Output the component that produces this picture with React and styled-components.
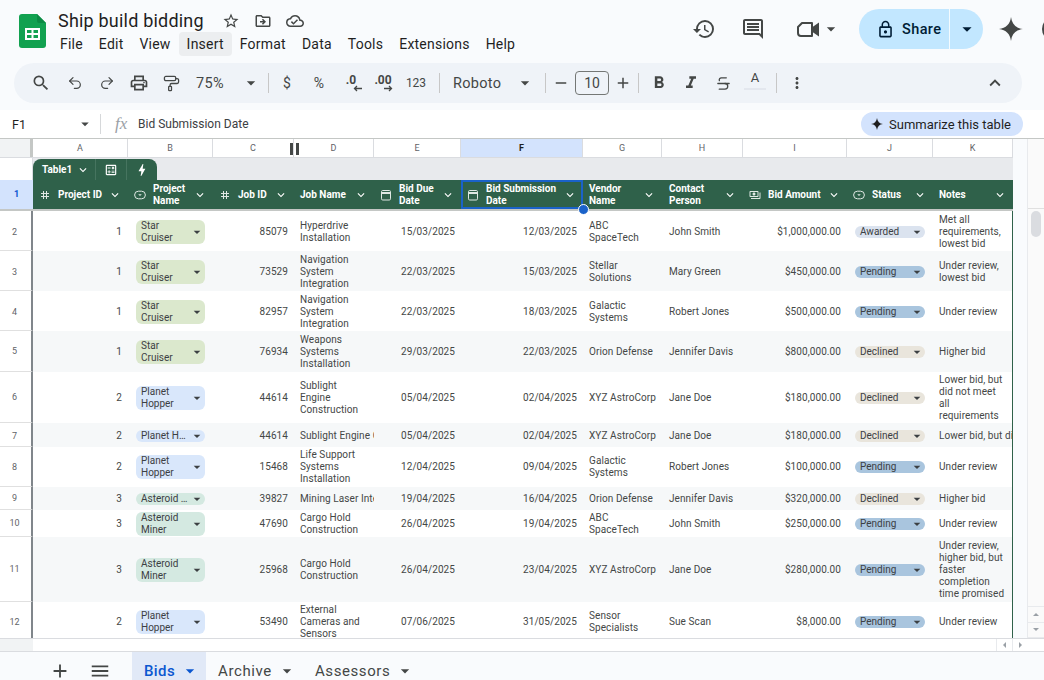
import React from 'react';
import styled, { createGlobalStyle } from 'styled-components';
import {
  MdSearch, MdOutlinePrint, MdArrowDropDown,
  MdRemove, MdAdd, MdFormatBold, MdFormatItalic, MdMoreVert, MdExpandLess,
  MdHistory, MdOutlineComment, MdLockOutline, MdStarBorder,
  MdOutlineDriveFileMove, MdOutlineCloudDone, MdKeyboardArrowDown, MdMenu, MdOutlineCalculate,
  MdOutlineBolt, MdOutlinePayments, MdTag,
} from 'react-icons/md';
import { Undo2, Redo2, PaintRoller, Strikethrough } from 'lucide-react';

const GlobalStyle = createGlobalStyle`
  html, body { margin: 0; padding: 0; background: #f9fbfd; }
  body { font-family: Roboto, "Liberation Sans", sans-serif; color: #444746; }
`;

const GREEN = '#2f614a';
const COLS = '33px 95px 85px 81px 80px 87px 122px 79px 81px 104px 86px 80px';

const columns = ['A', 'B', 'C', 'D', 'E', 'F', 'G', 'H', 'I', 'J', 'K'];

const headers = [
  { label: 'Project ID', icon: 'hash' },
  { label: 'Project Name', icon: 'pill' },
  { label: 'Job ID', icon: 'hash' },
  { label: 'Job Name' },
  { label: 'Bid Due Date', icon: 'date' },
  { label: 'Bid Submission Date', icon: 'date', selected: true },
  { label: 'Vendor Name' },
  { label: 'Contact Person', inset: true },
  { label: 'Bid Amount', icon: 'money' },
  { label: 'Status', icon: 'pill' },
  { label: 'Notes' },
];

const rows = [
  { n: 2, h: 40, nudge: true, pid: 1, ship: 'Star Cruiser', job: 85079, name: 'Hyperdrive Installation', due: '15/03/2025', sub: '12/03/2025', vendor: 'ABC SpaceTech', person: 'John Smith', amount: '$1,000,000.00', status: 'Awarded', notes: 'Met all requirements, lowest bid' },
  { n: 3, h: 40, nudge: true, pid: 1, ship: 'Star Cruiser', job: 73529, name: 'Navigation System Integration', due: '22/03/2025', sub: '15/03/2025', vendor: 'Stellar Solutions', person: 'Mary Green', amount: '$450,000.00', status: 'Pending', notes: 'Under review, lowest bid' },
  { n: 4, h: 40, nudge: true, pid: 1, ship: 'Star Cruiser', job: 82957, name: 'Navigation System Integration', due: '22/03/2025', sub: '18/03/2025', vendor: 'Galactic Systems', person: 'Robert Jones', amount: '$500,000.00', status: 'Pending', notes: 'Under review' },
  { n: 5, h: 41, pid: 1, ship: 'Star Cruiser', job: 76934, name: 'Weapons Systems Installation', due: '29/03/2025', sub: '22/03/2025', vendor: 'Orion Defense', person: 'Jennifer Davis', amount: '$800,000.00', status: 'Declined', notes: 'Higher bid' },
  { n: 6, h: 51, pid: 2, ship: 'Planet Hopper', job: 44614, name: 'Sublight Engine Construction', due: '05/04/2025', sub: '02/04/2025', vendor: 'XYZ AstroCorp', person: 'Jane Doe', amount: '$180,000.00', status: 'Declined', notes: 'Lower bid, but did not meet all requirements' },
  { n: 7, h: 24, nudge: true, clip: true, pid: 2, ship: 'Planet Hopper', job: 44614, name: 'Sublight Engine Construction', due: '05/04/2025', sub: '02/04/2025', vendor: 'XYZ AstroCorp', person: 'Jane Doe', amount: '$180,000.00', status: 'Declined', notes: 'Lower bid, but did not meet all requirements' },
  { n: 8, h: 40, pid: 2, ship: 'Planet Hopper', job: 15468, name: 'Life Support Systems Installation', due: '12/04/2025', sub: '09/04/2025', vendor: 'Galactic Systems', person: 'Robert Jones', amount: '$100,000.00', status: 'Pending', notes: 'Under review' },
  { n: 9, h: 23, clip: true, pid: 3, ship: 'Asteroid Miner', job: 39827, name: 'Mining Laser Integration', due: '19/04/2025', sub: '16/04/2025', vendor: 'Orion Defense', person: 'Jennifer Davis', amount: '$320,000.00', status: 'Declined', notes: 'Higher bid' },
  { n: 10, h: 27, pid: 3, ship: 'Asteroid Miner', job: 47690, name: 'Cargo Hold Construction', due: '26/04/2025', sub: '19/04/2025', vendor: 'ABC SpaceTech', person: 'John Smith', amount: '$250,000.00', status: 'Pending', notes: 'Under review' },
  { n: 11, h: 65, pid: 3, ship: 'Asteroid Miner', job: 25968, name: 'Cargo Hold Construction', due: '26/04/2025', sub: '23/04/2025', vendor: 'XYZ AstroCorp', person: 'Jane Doe', amount: '$280,000.00', status: 'Pending', notes: 'Under review, higher bid, but faster completion time promised' },
  { n: 12, h: 40, pid: 2, ship: 'Planet Hopper', job: 53490, name: 'External Cameras and Sensors', due: '07/06/2025', sub: '31/05/2025', vendor: 'Sensor Specialists', person: 'Sue Scan', amount: '$8,000.00', status: 'Pending', notes: 'Under review' },
];

const shipColors = { 'Star Cruiser': '#dbe8cd', 'Planet Hopper': '#d9e7fb', 'Asteroid Miner': '#d4e9e1' };
const statusColors = { Awarded: '#dbe3ef', Pending: '#a9c5de', Declined: '#e9e5dc' };

const Page = styled.div`
  width: 1044px;
  height: 680px;
  display: flex;
  flex-direction: column;
  overflow: hidden;
  background: #f9fbfd;
`;

const TopBar = styled.header`
  height: 63px;
  flex: none;
  display: flex;
  padding-left: 19px;
`;

const Logo = styled.svg`
  width: 27px;
  height: 34px;
  flex: none;
  margin: 14px 12px 0 0;
`;

const TitleColumn = styled.div`
  width: 626px;
  flex: none;
  padding-top: 9px;
`;

const TitleRow = styled.div`
  height: 23px;
  display: flex;
  align-items: center;
  color: #444746;
  font-size: 18px;
`;

const DocName = styled.span`
  width: 157px;
  color: #1f1f1f;
  letter-spacing: 0.2px;
  white-space: nowrap;
`;

const TitleIcon = styled.span`
  width: 32px;
  display: flex;
  justify-content: center;
  font-size: 18px;
`;

const MenuBar = styled.nav`
  display: flex;
  margin: 0 0 0 -6px;
`;

const MenuItem = styled.span`
  height: 24px;
  line-height: 24px;
  padding: 0 8px;
  border-radius: 4px;
  font-size: 14px;
  letter-spacing: 0.22px;
  color: #1f1f1f;
  background: ${(p) => (p.$active ? '#eceef0' : 'transparent')};
`;

const TopActions = styled.div`
  display: flex;
  align-items: center;
  height: 58px;
  flex: none;
  color: #444746;
`;

const RoundIcon = styled.span`
  width: 40px;
  display: flex;
  justify-content: center;
  font-size: 24px;
  margin-right: ${(p) => p.$mr || 0}px;
`;

const VideoButton = styled.span`
  width: 71px;
  padding-left: 9px;
  box-sizing: border-box;
  display: flex;
  align-items: center;

  > svg + svg {
    font-size: 20px;
    margin-left: 1px;
  }
`;

const ShareButton = styled.div`
  width: 124px;
  height: 40px;
  display: flex;
  flex: none;
  border-radius: 20px;
  overflow: hidden;
  background: #c2e7ff;
  color: #001d35;
`;

const ShareMain = styled.span`
  width: 91px;
  box-sizing: border-box;
  padding-left: 17px;
  display: flex;
  align-items: center;
  gap: 7px;
  font-size: 14.5px;
  font-weight: 500;
  letter-spacing: 0.4px;
  border-right: 1px solid #f4fbff;

  > svg {
    font-size: 19px;
  }
`;

const ShareCaret = styled.span`
  flex: 1;
  display: flex;
  align-items: center;
  justify-content: center;
  font-size: 22px;
`;

const SparkSlot = styled.span`
  width: 32px;
  margin: 0 15px 0 12px;
  display: flex;
  justify-content: center;
  flex: none;
`;

const Avatar = styled.span`
  width: 24px;
  height: 24px;
  flex: none;
  box-sizing: border-box;
  border: 2px solid #444746;
  border-radius: 50%;
`;

const Toolbar = styled.div`
  height: 40px;
  flex: none;
  margin: 0 22px 0 14px;
  padding-left: 11px;
  border-radius: 20px;
  background: #eff3f8;
  display: flex;
  align-items: center;
  color: #444746;
`;

const ToolButton = styled.span`
  width: ${(p) => p.$w || 32}px;
  margin-left: ${(p) => p.$ml || 0}px;
  height: 28px;
  flex: none;
  display: flex;
  align-items: center;
  justify-content: center;
  font-size: ${(p) => p.$size || 18}px;
`;

const ToolText = styled.span`
  font-size: ${(p) => p.$size || 12}px;
  font-weight: ${(p) => p.$weight || 400};
  color: #444746;
`;

const Decimal = styled.span`
  position: relative;
  display: block;
  font-size: 12px;
  font-weight: 700;
  line-height: 12px;
  margin-top: -6px;
`;

const DecimalArrow = styled.svg`
  position: absolute;
  right: ${(p) => p.$right}px;
  top: 11px;
  width: 9px;
  height: 7px;
`;

const Select = styled.span`
  width: ${(p) => p.$w}px;
  flex: none;
  padding-left: ${(p) => p.$pl}px;
  box-sizing: border-box;
  display: flex;
  align-items: center;
  justify-content: space-between;
  font-size: 14.5px;
  letter-spacing: 0.3px;

  > svg {
    font-size: 20px;
    margin-right: ${(p) => p.$caret || 0}px;
  }
`;

const Divider = styled.span`
  width: 1px;
  height: 20px;
  flex: none;
  background: #c7c7c7;
`;

const SizeBox = styled.span`
  width: 34px;
  height: 24px;
  box-sizing: border-box;
  flex: none;
  margin: 0 -1px;
  border: 1px solid #747775;
  border-radius: 4px;
  font-size: 14px;
  line-height: 22px;
  text-align: center;
`;

const ColorA = styled.span`
  display: block;
  width: 22px;
  height: 19px;
  line-height: 14px;
  text-align: center;
  font-size: 13px;
  border-bottom: 2px solid #e3e7ee;
  box-sizing: border-box;
  margin-top: -6px;
`;

const FormulaBar = styled.div`
  height: 28px;
  flex: none;
  margin-top: 7px;
  display: flex;
  align-items: center;
  background: #fff;
`;

const NameBox = styled.span`
  width: 101px;
  padding: 0 6px 0 12px;
  box-sizing: border-box;
  display: flex;
  align-items: center;
  justify-content: space-between;
  font-size: 12.5px;
  color: #1f1f1f;
  border-right: 1px solid #d6d8da;
  height: 20px;

  > svg {
    font-size: 18px;
    color: #444746;
  }
`;

const FxLabel = styled.span`
  width: 37px;
  padding-left: 14px;
  box-sizing: border-box;
  font-family: "Liberation Serif", serif;
  font-style: italic;
  font-size: 17px;
  color: #9aa0a6;
`;

const FormulaText = styled.span`
  font-size: 12px;
  color: #3c4043;
  flex: 1;
`;

const SummarizeButton = styled.span`
  width: 162px;
  height: 24px;
  margin-right: 21px;
  border-radius: 12px;
  background: #d3e3fd;
  display: flex;
  align-items: center;
  padding-left: 10px;
  box-sizing: border-box;
  gap: 6px;
  font-size: 13px;
  color: #1f1f1f;
  white-space: nowrap;
`;

const Sheet = styled.section`
  flex: 1;
  min-height: 0;
  display: flex;
  flex-direction: column;
  border-top: 1px solid #c4c7c5;
  background: #fff;
`;

const SheetMain = styled.div`
  flex: 1;
  min-height: 0;
  display: flex;
`;

const Grid = styled.div`
  width: 1013px;
  flex: none;
  display: flex;
  flex-direction: column;
`;

const ColumnLetters = styled.div`
  display: grid;
  grid-template-columns: ${COLS};
  height: 18px;
  flex: none;
  border-bottom: 1px solid #dadce0;
  box-sizing: content-box;
  position: relative;
`;

const Corner = styled.div`
  background: #f1f3f4;
  border-right: 3px solid #c4c7c5;
  box-sizing: border-box;
`;

const Letter = styled.div`
  font-size: 9px;
  line-height: 18px;
  text-align: center;
  color: ${(p) => (p.$selected ? '#1f1f1f' : '#5f6368')};
  font-weight: ${(p) => (p.$selected ? 700 : 400)};
  background: ${(p) => (p.$selected ? '#d3e3fd' : '#fff')};
  border-right: 1px solid #dadce0;
  box-sizing: border-box;
`;

const DragHandle = styled.span`
  position: absolute;
  left: 290px;
  top: 4px;
  width: 9px;
  height: 12px;
  border-left: 3px solid #444746;
  border-right: 3px solid #444746;
  box-sizing: border-box;
`;

const BandRow = styled.div`
  height: 22px;
  flex: none;
  display: flex;
  background: #e8eaed;
`;

const BandCorner = styled.div`
  width: 33px;
  background: #fff;
  border-right: 1px solid #dadce0;
  box-sizing: border-box;
`;

const TableTab = styled.div`
  margin-top: 1px;
  width: 124px;
  display: flex;
  align-items: center;
  background: ${GREEN};
  border-radius: 8px 8px 0 0;
  color: #fff;
`;

const TabSegment = styled.span`
  width: ${(p) => p.$w}px;
  height: 100%;
  box-sizing: border-box;
  display: flex;
  align-items: center;
  justify-content: ${(p) => (p.$center ? 'center' : 'flex-start')};
  padding-left: ${(p) => (p.$center ? 0 : 9)}px;
  gap: 4px;
  font-size: 10px;
  font-weight: 700;
  border-right: ${(p) => (p.$last ? 'none' : '1px solid #46745f')};

  > svg {
    font-size: ${(p) => p.$icon || 14}px;
  }
`;

const HeaderRow = styled.div`
  display: grid;
  grid-template-columns: ${COLS};
  height: 29px;
  flex: none;
  background: ${GREEN};
  border-bottom: 2px solid #c4c7c5;
  box-sizing: content-box;
`;

const HeaderNumber = styled.div`
  background: #d3e3fd;
  color: #0b57d0;
  font-size: 9px;
  font-weight: 700;
  line-height: 29px;
  text-align: center;
`;

const HeaderCell = styled.div`
  position: relative;
  display: flex;
  align-items: center;
  gap: 7px;
  padding: 0 7px 0 ${(p) => (p.$inset ? 7 : 6)}px;
  color: #fff;
  font-size: 10px;
  font-weight: 700;
  line-height: 12px;
  box-shadow: ${(p) => (p.$selected ? 'inset 0 0 0 2px #1a62c9' : 'none')};
  min-width: 0;
`;

const HeaderIcon = styled.span`
  width: 12px;
  display: flex;
  justify-content: center;
  flex: none;
  font-size: 12px;
  color: #dfe8e3;
`;

const HeaderLabel = styled.span`
  flex: 1;
  min-width: 0;
`;

const HeaderChevron = styled(MdKeyboardArrowDown)`
  flex: none;
  font-size: 14px;
  margin: 0 -1px 0 -5px;
`;

const SelectionDot = styled.span`
  position: absolute;
  right: -6px;
  bottom: -6px;
  width: 9px;
  height: 9px;
  border-radius: 50%;
  background: #1a62c9;
  border: 1px solid #fff;
  z-index: 2;
`;

const Body = styled.div`
  flex: 1;
  min-height: 0;
  overflow: hidden;
`;

const Row = styled.div`
  display: grid;
  grid-template-columns: ${COLS};
  height: ${(p) => p.$h}px;
  font-size: 10px;
  line-height: 12px;
  color: #444746;
  background: ${(p) => (p.$alt ? '#f6f8f9' : '#fff')};

  ${(p) => p.$nudge && '> div { padding-top: 2px; }'}
`;

const RowNumber = styled.div`
  background: #fff;
  border-right: 2px solid #80868b;
  border-bottom: 1px solid #e0e0e0;
  box-sizing: border-box;
  display: flex;
  align-items: center;
  justify-content: center;
  padding-right: 2px;
  font-size: 9px;
  color: #5f6368;
`;

const Cell = styled.div`
  min-width: 0;
  overflow: hidden;
  display: flex;
  align-items: center;
  justify-content: ${(p) => (p.$right ? 'flex-end' : 'flex-start')};
  padding: 0 ${(p) => (p.$right ? 6 : 5)}px 0 ${(p) => (p.$inset ? 7 : 6)}px;
  white-space: ${(p) => (p.$clip ? 'nowrap' : 'normal')};
  letter-spacing: 0.08px;
  border-right: ${(p) => (p.$edge ? `1px solid ${GREEN}` : 'none')};
`;

const ChipCell = styled.div`
  display: flex;
  align-items: center;
  min-width: 0;
  padding: 0 8px;
`;

const Chip = styled.span`
  width: 100%;
  min-width: 0;
  display: flex;
  align-items: center;
  padding-left: 5px;
  box-sizing: border-box;
  background: ${(p) => p.$color};
  border-radius: ${(p) => (p.$pill ? 7 : 6)}px;
  height: ${(p) => (p.$pill || p.$clip ? 12 : 24)}px;
  color: #3c4043;

  > span {
    flex: 1;
    min-width: 0;
    ${(p) => p.$clip && 'white-space: nowrap; overflow: hidden; text-overflow: ellipsis;'}
  }

  > svg {
    flex: none;
    font-size: 16px;
  }
`;

const HScroll = styled.div`
  height: 12px;
  flex: none;
  display: flex;
  align-items: center;
  justify-content: flex-end;
  padding-right: 16px;
  border-top: 1px solid #dadce0;
  border-bottom: 1px solid #dadce0;
  box-sizing: content-box;
  background: #fff;
`;

const HScrollCorner = styled.span`
  width: 33px;
  height: 100%;
  margin-right: auto;
  background: #f1f3f4;
`;

const ScrollArrow = styled.span`
  width: 16px;
  height: 100%;
  display: flex;
  align-items: center;
  justify-content: center;
  border-left: 1px solid #e8eaed;
  box-sizing: border-box;
`;

const Triangle = styled.span`
  width: 0;
  height: 0;
  border-style: solid;
  border-color: transparent;
  border-width: 3px;
  ${(p) => p.$dir === 'left' && 'border-right-color: #9aa0a6; margin-left: -3px;'}
  ${(p) => p.$dir === 'right' && 'border-left-color: #9aa0a6; margin-right: -3px;'}
  ${(p) => p.$dir === 'up' && 'border-bottom-color: #9aa0a6; margin-top: -3px;'}
  ${(p) => p.$dir === 'down' && 'border-top-color: #9aa0a6; margin-bottom: -3px;'}
`;

const Gutter = styled.div`
  width: 31px;
  flex: none;
  display: flex;
  background: #fafafa;
`;

const GutterBlank = styled.div`
  width: 14px;
  flex: none;
  background: #f9fbfd;
`;

const ScrollTrack = styled.div`
  flex: 1;
  display: flex;
  flex-direction: column;
  background: #fafafa;
  border-left: 1px solid #e8eaed;
`;

const TrackHead = styled.div`
  height: 70px;
  flex: none;
  border-bottom: 1px solid #e0e0e0;
  box-sizing: border-box;
`;

const Thumb = styled.div`
  width: 10px;
  height: 26px;
  flex: none;
  margin: 2px 0 0 3px;
  border-radius: 5px;
  background: #dadce0;
`;

const ScrollButtons = styled.div`
  margin-top: auto;
  height: 31px;
  flex: none;
  display: flex;
  flex-direction: column;
  border-top: 1px solid #e8eaed;
`;

const ScrollButton = styled.span`
  flex: 1;
  display: flex;
  align-items: center;
  justify-content: center;
  border-bottom: 1px solid #e8eaed;
`;

const TabBar = styled.footer`
  height: 28px;
  flex: none;
  display: flex;
  background: #f9fbfd;
  color: #444746;
  overflow: hidden;
`;

const BarIcon = styled.span`
  width: 40px;
  flex: none;
  padding-top: 10px;
  display: flex;
  align-items: center;
  justify-content: center;
  font-size: 22px;
  margin-left: ${(p) => p.$ml || 0}px;
`;

const SheetTab = styled.span`
  flex: none;
  margin-left: ${(p) => p.$ml || 0}px;
  padding: 10px 9px 0 12px;
  display: flex;
  align-items: center;
  gap: 8px;
  font-size: 15px;
  font-weight: ${(p) => (p.$active ? 500 : 400)};
  letter-spacing: ${(p) => (p.$active ? 0.4 : 0.6)}px;
  color: ${(p) => (p.$active ? '#0b57d0' : '#444746')};
  background: ${(p) => (p.$active ? '#e1e9f7' : 'transparent')};

  > svg {
    font-size: 20px;
    margin: 0 -3px;
  }
`;

function Spark({ size, color = '#444746' }) {
  return (
    <svg width={size} height={size} viewBox="0 0 24 24">
      <path fill={color} d="M12 0C12.8 7 17 11.2 24 12C17 12.8 12.8 17 12 24C11.2 17 7 12.8 0 12C7 11.2 11.2 7 12 0Z" />
    </svg>
  );
}

function VideoIcon() {
  return (
    <svg width="23" height="17" viewBox="0 0 23 17" fill="none">
      <path d="M5 2H15V15H4A3 3 0 0 1 1 12V6Z" stroke="#444746" strokeWidth="2" strokeLinejoin="round" />
      <path d="M15.5 6L22 1.5V15.5L15.5 11Z" fill="#444746" />
    </svg>
  );
}

function PillIcon() {
  return (
    <svg width="12" height="12" viewBox="0 0 12 12" fill="none">
      <rect x="0.6" y="2.2" width="10.8" height="7.6" rx="3.8" stroke="currentColor" />
      <path d="M4.2 5.2H7.8L6 7Z" fill="currentColor" />
    </svg>
  );
}

function DateIcon() {
  return (
    <svg width="12" height="12" viewBox="0 0 12 12" fill="none">
      <rect x="1.5" y="1.5" width="9" height="9.5" rx="1.2" stroke="currentColor" />
      <rect x="2" y="3" width="8" height="2" fill="currentColor" />
    </svg>
  );
}

function ColumnIcon({ type }) {
  if (type === 'hash') return <MdTag />;
  if (type === 'pill') return <PillIcon />;
  if (type === 'date') return <DateIcon />;
  return <MdOutlinePayments />;
}

function SheetChip({ label, color, clip, pill }) {
  return (
    <ChipCell>
      <Chip $color={color} $clip={clip} $pill={pill}>
        <span>{label}</span>
        <MdArrowDropDown />
      </Chip>
    </ChipCell>
  );
}

export default function App() {
  return (
    <Page>
      <GlobalStyle />
      <TopBar>
        <Logo viewBox="0 0 27 34">
          <path fill="#12a150" d="M3 0H18L27 9V31A3 3 0 0 1 24 34H3A3 3 0 0 1 0 31V3A3 3 0 0 1 3 0Z" />
          <path fill="#0c8a44" d="M18 0L27 9H20A2 2 0 0 1 18 7Z" />
          <path fill="#fff" d="M6 14H21V26H6ZM8 16V19H12.5V16ZM14.5 16V19H19V16ZM8 21V24H12.5V21ZM14.5 21V24H19V21Z" fillRule="evenodd" />
        </Logo>
        <TitleColumn>
          <TitleRow>
            <DocName>Ship build bidding</DocName>
            <TitleIcon><MdStarBorder /></TitleIcon>
            <TitleIcon><MdOutlineDriveFileMove /></TitleIcon>
            <TitleIcon><MdOutlineCloudDone /></TitleIcon>
          </TitleRow>
          <MenuBar>
            <MenuItem>File</MenuItem>
            <MenuItem>Edit</MenuItem>
            <MenuItem>View</MenuItem>
            <MenuItem $active>Insert</MenuItem>
            <MenuItem>Format</MenuItem>
            <MenuItem>Data</MenuItem>
            <MenuItem>Tools</MenuItem>
            <MenuItem>Extensions</MenuItem>
            <MenuItem>Help</MenuItem>
          </MenuBar>
        </TitleColumn>
        <TopActions>
          <RoundIcon $mr={9}><MdHistory /></RoundIcon>
          <RoundIcon $mr={15}><MdOutlineComment /></RoundIcon>
          <VideoButton><VideoIcon /><MdArrowDropDown /></VideoButton>
          <ShareButton>
            <ShareMain><MdLockOutline />Share</ShareMain>
            <ShareCaret><MdArrowDropDown /></ShareCaret>
          </ShareButton>
          <SparkSlot><Spark size={24} /></SparkSlot>
          <Avatar />
        </TopActions>
      </TopBar>

      <Toolbar>
        <ToolButton $size={20}><MdSearch /></ToolButton>
        <ToolButton $ml={2}><Undo2 size={16} strokeWidth={1.8} /></ToolButton>
        <ToolButton><Redo2 size={16} strokeWidth={1.8} /></ToolButton>
        <ToolButton $size={20}><MdOutlinePrint /></ToolButton>
        <ToolButton><PaintRoller size={17} strokeWidth={1.8} /></ToolButton>
        <Select $w={81} $pl={9} $caret={7}>75%<MdArrowDropDown /></Select>
        <Divider />
        <ToolButton $ml={2}><ToolText $size={14}>$</ToolText></ToolButton>
        <ToolButton><ToolText $size={14}>%</ToolText></ToolButton>
        <ToolButton>
          <Decimal>
            .0
            <DecimalArrow $right={-6} viewBox="0 0 9 7"><path d="M9 3.5H2M4 1L1.5 3.5L4 6" stroke="#444746" strokeWidth="1.3" fill="none" /></DecimalArrow>
          </Decimal>
        </ToolButton>
        <ToolButton>
          <Decimal>
            .00
            <DecimalArrow $right={-1} viewBox="0 0 9 7"><path d="M0 3.5H7M5 1L7.5 3.5L5 6" stroke="#444746" strokeWidth="1.3" fill="none" /></DecimalArrow>
          </Decimal>
        </ToolButton>
        <ToolButton $ml={1}><ToolText>123</ToolText></ToolButton>
        <ToolButton $w={7} />
        <Divider />
        <Select $w={105} $pl={13} $caret={10}>Roboto<MdArrowDropDown /></Select>
        <Divider />
        <ToolButton $w={30}><MdRemove /></ToolButton>
        <SizeBox>10</SizeBox>
        <ToolButton $w={30}><MdAdd /></ToolButton>
        <Divider />
        <ToolButton $ml={4} $size={20}><MdFormatBold /></ToolButton>
        <ToolButton $size={20}><MdFormatItalic /></ToolButton>
        <ToolButton><Strikethrough size={17} strokeWidth={1.8} /></ToolButton>
        <ToolButton><ColorA>A</ColorA></ToolButton>
        <ToolButton $w={5} />
        <Divider />
        <ToolButton $ml={4}><MdMoreVert /></ToolButton>
        <ToolButton $ml={166} $size={22}><MdExpandLess /></ToolButton>
      </Toolbar>

      <FormulaBar>
        <NameBox>F1<MdArrowDropDown /></NameBox>
        <FxLabel>fx</FxLabel>
        <FormulaText>Bid Submission Date</FormulaText>
        <SummarizeButton><Spark size={12} color="#1f1f1f" />Summarize this table</SummarizeButton>
      </FormulaBar>

      <Sheet>
        <SheetMain>
          <Grid>
            <ColumnLetters>
              <Corner />
              {columns.map((c) => <Letter key={c} $selected={c === 'F'}>{c}</Letter>)}
              <DragHandle />
            </ColumnLetters>
            <BandRow>
              <BandCorner />
              <TableTab>
                <TabSegment $w={63}>Table1<MdKeyboardArrowDown /></TabSegment>
                <TabSegment $w={31} $center><MdOutlineCalculate /></TabSegment>
                <TabSegment $w={30} $center $last $icon={16}><MdOutlineBolt /></TabSegment>
              </TableTab>
            </BandRow>
            <HeaderRow>
              <HeaderNumber>1</HeaderNumber>
              {headers.map((h) => (
                <HeaderCell key={h.label} $selected={h.selected} $inset={h.inset}>
                  {h.icon && <HeaderIcon><ColumnIcon type={h.icon} /></HeaderIcon>}
                  <HeaderLabel>{h.label}</HeaderLabel>
                  <HeaderChevron />
                  {h.selected && <SelectionDot />}
                </HeaderCell>
              ))}
            </HeaderRow>
            <Body>
              {rows.map((r) => (
                <Row key={r.n} $h={r.h} $alt={r.n % 2 === 1} $nudge={r.nudge}>
                  <RowNumber>{r.n}</RowNumber>
                  <Cell $right>{r.pid}</Cell>
                  <SheetChip label={r.ship} color={shipColors[r.ship]} clip={r.clip} />
                  <Cell $right>{r.job}</Cell>
                  <Cell $clip={r.clip}>{r.name}</Cell>
                  <Cell $right>{r.due}</Cell>
                  <Cell $right>{r.sub}</Cell>
                  <Cell $clip={r.clip}>{r.vendor}</Cell>
                  <Cell $clip={r.clip} $inset>{r.person}</Cell>
                  <Cell $right>{r.amount}</Cell>
                  <SheetChip label={r.status} color={statusColors[r.status]} pill />
                  <Cell $clip={r.clip} $edge>{r.notes}</Cell>
                </Row>
              ))}
            </Body>
          </Grid>
          <Gutter>
            <GutterBlank />
            <ScrollTrack>
              <TrackHead />
              <Thumb />
              <ScrollButtons>
                <ScrollButton><Triangle $dir="up" /></ScrollButton>
                <ScrollButton><Triangle $dir="down" /></ScrollButton>
              </ScrollButtons>
            </ScrollTrack>
          </Gutter>
        </SheetMain>
        <HScroll>
          <HScrollCorner />
          <ScrollArrow><Triangle $dir="left" /></ScrollArrow>
          <ScrollArrow><Triangle $dir="right" /></ScrollArrow>
        </HScroll>
      </Sheet>

      <TabBar>
        <BarIcon $ml={40}><MdAdd /></BarIcon>
        <BarIcon><MdMenu /></BarIcon>
        <SheetTab $active $ml={12}>Bids<MdArrowDropDown /></SheetTab>
        <SheetTab>Archive<MdArrowDropDown /></SheetTab>
        <SheetTab>Assessors<MdArrowDropDown /></SheetTab>
      </TabBar>
    </Page>
  );
}
